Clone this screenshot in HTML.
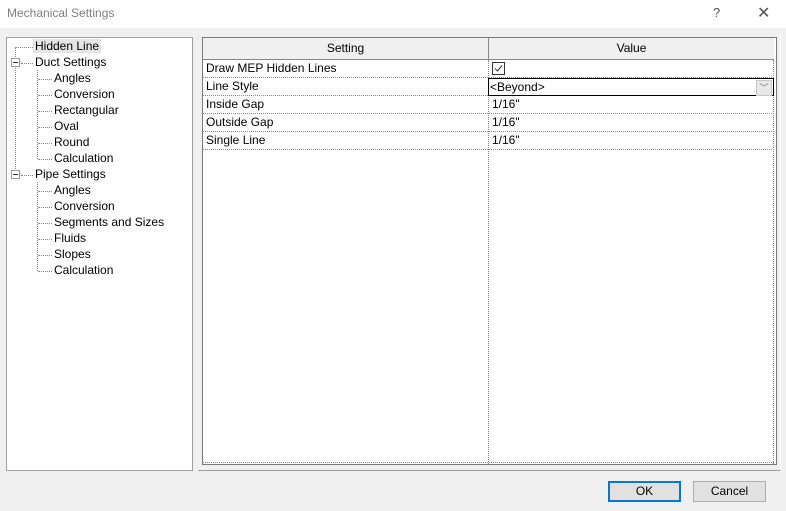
<!DOCTYPE html>
<html><head><style>
body{margin:0;width:786px;height:511px;background:#f0f0f0;font-family:"Liberation Sans",sans-serif;font-size:12px;color:#000;position:relative;overflow:hidden}
.a{position:absolute}
.title{left:0;top:0;width:786px;height:28px;background:#fff}
.tree{left:6px;top:37px;width:185px;height:432px;background:#fff;border:1px solid #a0a0a0}
.ti{position:absolute;white-space:nowrap;line-height:14px}
.hl{position:absolute;border-top:1px dotted #888;height:0}
.vl{position:absolute;border-left:1px dotted #888;width:0}
.box{position:absolute;width:7px;height:7px;border:1px solid #999;background:#fff}
.box:after{content:"";position:absolute;left:1px;top:3px;width:5px;height:1px;background:#333}
.grid{left:202px;top:37px;width:573px;height:426px;background:#fff;border:1px solid #7a7a7a}
.hdr{position:absolute;top:0;height:21px;background:#f0f0f0;border-bottom:1px solid #888;text-align:center;line-height:21px}
.row{position:absolute;left:0;width:571px;height:17px;border-bottom:1px dotted #888}
.c{position:absolute;top:0;line-height:17px;padding-left:3px}
.btn{position:absolute;top:481px;height:19px;background:#e1e1e1;border:1px solid #adadad;text-align:center;line-height:19px}
</style></head><body>
<div class="a title"><span class="a" style="left:7px;top:6px;color:#808080;font-size:12px">Mechanical Settings</span>
<span class="a" style="left:713px;top:5px;color:#555;font-size:13px">?</span>
<span class="a" style="left:757px;top:3px;color:#555;font-size:16px">✕</span></div>
<div class="a" style="left:198px;top:34px;width:582px;height:436px;border-bottom:1px solid #a0a0a0;border-right:1px solid #fff"></div>
<div class="a tree">
 <div class="vl" style="left:8px;top:9px;height:128px"></div>
 <div class="hl" style="left:9px;top:9px;width:17px"></div>
 <div class="ti" style="left:26px;top:1px;background:#e5e5e5;padding:0 2px">Hidden Line</div>
 <div class="box" style="left:4px;top:20px"></div>
 <div class="hl" style="left:14px;top:25px;width:12px"></div>
 <div class="ti" style="left:28px;top:17px">Duct Settings</div>
 <div class="vl" style="left:30px;top:32px;height:89px"></div>
 <div class="hl" style="left:31px;top:41px;width:14px"></div><div class="ti" style="left:47px;top:33px">Angles</div>
 <div class="hl" style="left:31px;top:57px;width:14px"></div><div class="ti" style="left:47px;top:49px">Conversion</div>
 <div class="hl" style="left:31px;top:73px;width:14px"></div><div class="ti" style="left:47px;top:65px">Rectangular</div>
 <div class="hl" style="left:31px;top:89px;width:14px"></div><div class="ti" style="left:47px;top:81px">Oval</div>
 <div class="hl" style="left:31px;top:105px;width:14px"></div><div class="ti" style="left:47px;top:97px">Round</div>
 <div class="hl" style="left:31px;top:121px;width:14px"></div><div class="ti" style="left:47px;top:113px">Calculation</div>
 <div class="box" style="left:4px;top:132px"></div>
 <div class="hl" style="left:14px;top:137px;width:12px"></div>
 <div class="ti" style="left:28px;top:129px">Pipe Settings</div>
 <div class="vl" style="left:30px;top:144px;height:89px"></div>
 <div class="hl" style="left:31px;top:153px;width:14px"></div><div class="ti" style="left:47px;top:145px">Angles</div>
 <div class="hl" style="left:31px;top:169px;width:14px"></div><div class="ti" style="left:47px;top:161px">Conversion</div>
 <div class="hl" style="left:31px;top:185px;width:14px"></div><div class="ti" style="left:47px;top:177px">Segments and Sizes</div>
 <div class="hl" style="left:31px;top:201px;width:14px"></div><div class="ti" style="left:47px;top:193px">Fluids</div>
 <div class="hl" style="left:31px;top:217px;width:14px"></div><div class="ti" style="left:47px;top:209px">Slopes</div>
 <div class="hl" style="left:31px;top:233px;width:14px"></div><div class="ti" style="left:47px;top:225px">Calculation</div>
</div>
<div class="a grid">
 <div class="hdr" style="left:0;width:285px;border-right:1px solid #888">Setting</div>
 <div class="hdr" style="left:286px;width:285px">Value</div>
 <div class="vl" style="left:285px;top:22px;height:404px"></div>
 <div class="vl" style="left:570px;top:22px;height:404px"></div>
 <div class="row" style="top:22px"><span class="c">Draw MEP Hidden Lines</span>
  <span class="a" style="left:289px;top:2px;width:11px;height:11px;border:1px solid #333;background:#fff"><svg width="11" height="11" style="position:absolute;left:0;top:0"><path d="M2 5.5 L4.5 8 L9 2.5" stroke="#333" fill="none" stroke-width="1"/></svg></span></div>
 <div class="row" style="top:40px"><span class="c">Line Style</span>
  <span class="a" style="left:285px;top:0;width:284px;height:16px;border:1px solid #000;background:#fff"><span class="c" style="padding-left:1px;line-height:16px">&lt;Beyond&gt;</span>
  <span class="a" style="right:1px;top:1px;width:14px;height:14px;background:#e8e8e8;border:1px solid #c8c8c8;color:#777;font-size:9px;text-align:center;line-height:14px">﹀</span></span></div>
 <div class="row" style="top:58px"><span class="c">Inside Gap</span><span class="c" style="left:286px">1/16"</span></div>
 <div class="row" style="top:76px"><span class="c">Outside Gap</span><span class="c" style="left:286px">1/16"</span></div>
 <div class="row" style="top:94px"><span class="c">Single Line</span><span class="c" style="left:286px">1/16"</span></div>
 <div class="a" style="left:0;top:424px;width:571px;border-top:1px dotted #888"></div>
</div>
<div class="btn" style="left:608px;width:69px;height:17px;line-height:17px;border:2px solid #0078d7">OK</div>
<div class="btn" style="left:693px;width:71px">Cancel</div>
</body></html>
